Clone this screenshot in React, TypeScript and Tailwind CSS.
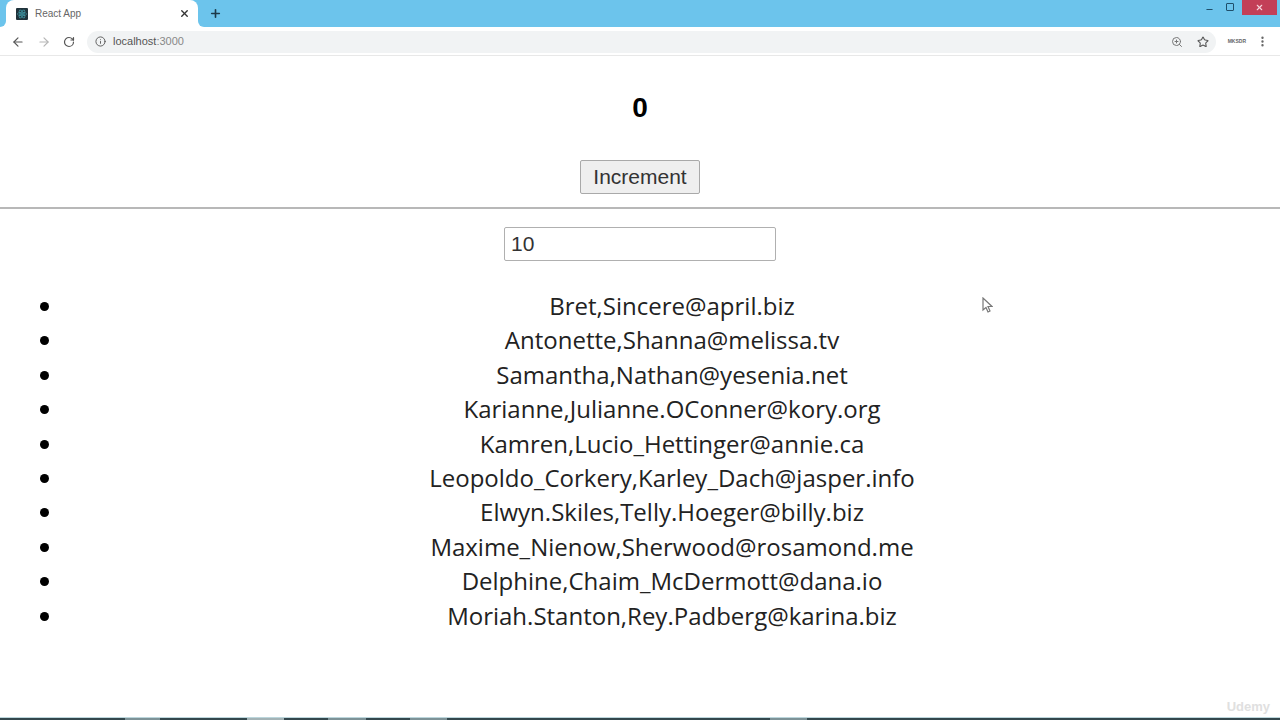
import { ArrowLeft, ArrowRight, Info, MoreVertical, Plus, RotateCw, Star, X, ZoomIn, Minus } from 'lucide-react';

const emails = [
  'Bret,Sincere@april.biz',
  'Antonette,Shanna@melissa.tv',
  'Samantha,Nathan@yesenia.net',
  'Karianne,Julianne.OConner@kory.org',
  'Kamren,Lucio_Hettinger@annie.ca',
  'Leopoldo_Corkery,Karley_Dach@jasper.info',
  'Elwyn.Skiles,Telly.Hoeger@billy.biz',
  'Maxime_Nienow,Sherwood@rosamond.me',
  'Delphine,Chaim_McDermott@dana.io',
  'Moriah.Stanton,Rey.Padberg@karina.biz',
];

function Favicon() {
  return (
    <svg width="12" height="12" viewBox="0 0 12 12" className="shrink-0">
      <rect width="12" height="12" rx="1" fill="#20323a" />
      <g fill="none" stroke="#3f9aa8" strokeWidth="0.7">
        <ellipse cx="6" cy="6" rx="4.6" ry="1.8" />
        <ellipse cx="6" cy="6" rx="4.6" ry="1.8" transform="rotate(60 6 6)" />
        <ellipse cx="6" cy="6" rx="4.6" ry="1.8" transform="rotate(120 6 6)" />
      </g>
      <circle cx="6" cy="6" r="1" fill="#3f9aa8" />
    </svg>
  );
}

function BrowserBar() {
  return (
    <div className="font-['Liberation_Sans',sans-serif]">
      <div className="h-[27px] bg-[#6cc4ec] flex">
        <div className="w-[6px] h-full flex items-end">
          <div className="w-full h-[8px] bg-white">
            <div className="w-full h-full bg-[#6cc4ec] rounded-br-[6px]" />
          </div>
        </div>
        <div className="w-[192px] h-[27px] bg-white rounded-t-[8px] flex items-center pl-[10px] pr-[8px]">
          <Favicon />
          <span className="ml-[7px] text-[10px] text-[#666666] flex-1">React App</span>
          <X size={11} strokeWidth={3} className="text-[#333333]" />
        </div>
        <div className="flex-1 h-full flex relative">
          <div className="absolute left-0 bottom-0 w-[6px] h-[8px] bg-white">
            <div className="w-full h-full bg-[#6cc4ec] rounded-bl-[6px]" />
          </div>
          <Plus size={13} strokeWidth={3} className="ml-[11px] mt-[7px] text-[#1c3a4a]" />
          <div className="flex-1 flex justify-end items-start pr-[3px]">
            <Minus size={9} strokeWidth={3} className="mt-[5px] text-[#1f4f6b]" />
            <div className="mt-[3px] ml-[12px] w-[8px] h-[8px] border border-[#1f4f6b] rounded-[1px]" />
            <div className="ml-[8px] w-[35px] h-[15px] bg-[#c33f57] flex items-center justify-center">
              <X size={9} strokeWidth={3} className="text-[#f5d5dc]" />
            </div>
          </div>
        </div>
      </div>
      <div className="h-[29px] pt-[1px] bg-white border-b border-[#e8e8e8] flex items-center pl-[11px] pr-[11px]">
        <ArrowLeft size={14} strokeWidth={2} className="text-[#555555]" />
        <ArrowRight size={14} strokeWidth={2} className="ml-[12px] text-[#b5b5b5]" />
        <RotateCw size={12} strokeWidth={2.4} className="ml-[12px] text-[#555555]" />
        <div className="ml-[12px] w-[1130px] h-[22px] bg-[#f1f3f4] rounded-full flex items-center pl-[8px] pr-[7px]">
          <Info size={11} className="text-[#555555]" />
          <span className="ml-[7px] text-[11px] text-[#555555]">
            localhost<span className="text-[#888888]">:3000</span>
          </span>
          <div className="flex-1" />
          <ZoomIn size={12} className="text-[#777777]" />
          <Star size={12} strokeWidth={2.2} className="ml-[14px] text-[#555555]" />
        </div>
        <span className="ml-[12px] text-[5px] font-bold text-[#666666]">MKSDR</span>
        <MoreVertical size={13} strokeWidth={2.4} className="ml-[10px] text-[#666666]" />
      </div>
    </div>
  );
}

function Taskbar() {
  return (
    <div className="absolute left-0 bottom-0 w-full h-[3px] flex bg-[#33474d] border-t border-[#bcd6dc]">
      <div className="ml-[125px] w-[35px] bg-[#7d9297]" />
      <div className="ml-[87px] w-[37px] bg-[#a3b3b6]" />
      <div className="ml-[44px] w-[38px] bg-[#7d9297]" />
      <div className="ml-[44px] w-[37px] bg-[#7d9297]" />
      <div className="ml-[323px] w-[37px] bg-[#7d9297]" />
    </div>
  );
}

export default function App() {
  return (
    <div className="relative w-[1280px] h-[720px] overflow-hidden bg-white flex flex-col">
      <BrowserBar />
      <main className="flex-1 flex flex-col items-center">
        <h1 className="mt-[36px] text-[28px] leading-[32px] font-bold text-black font-['Liberation_Sans',sans-serif]">0</h1>
        <button className="mt-[36px] w-[120px] h-[34px] bg-[#efefef] border border-[#a9a9a9] rounded-[2px] text-[21px] text-[#333333] font-['Liberation_Sans',sans-serif]">
          Increment
        </button>
        <hr className="mt-[13px] w-full border-t-2 border-[#b8b8b8]" />
        <input
          readOnly
          value="10"
          className="mt-[18px] w-[272px] h-[34px] px-[6px] border border-[#b0b0b0] rounded-[2px] text-[21px] text-[#333333] font-['Liberation_Sans',sans-serif]"
        />
        <ul className="mt-[28px] w-full pl-[64px] list-disc text-[24px] leading-[34.4px] text-[#222222] font-['Open_Sans',sans-serif]">
          {emails.map((email) => (
            <li key={email} className="text-center marker:text-black">{email}</li>
          ))}
        </ul>
      </main>
      <svg className="absolute left-[982px] top-[297px]" width="11" height="17" viewBox="0 0 11 17">
        <path d="M1 1 L1 13 L4 10.5 L6 15 L8 14 L6 9.5 L10 9.5 Z" fill="#ffffff" stroke="#777777" strokeWidth="1.2" />
      </svg>
      <span className="absolute right-[10px] top-[697px] text-[13px] font-bold text-[#e0e0e0] font-['Liberation_Sans',sans-serif]">Udemy</span>
      <Taskbar />
    </div>
  );
}
